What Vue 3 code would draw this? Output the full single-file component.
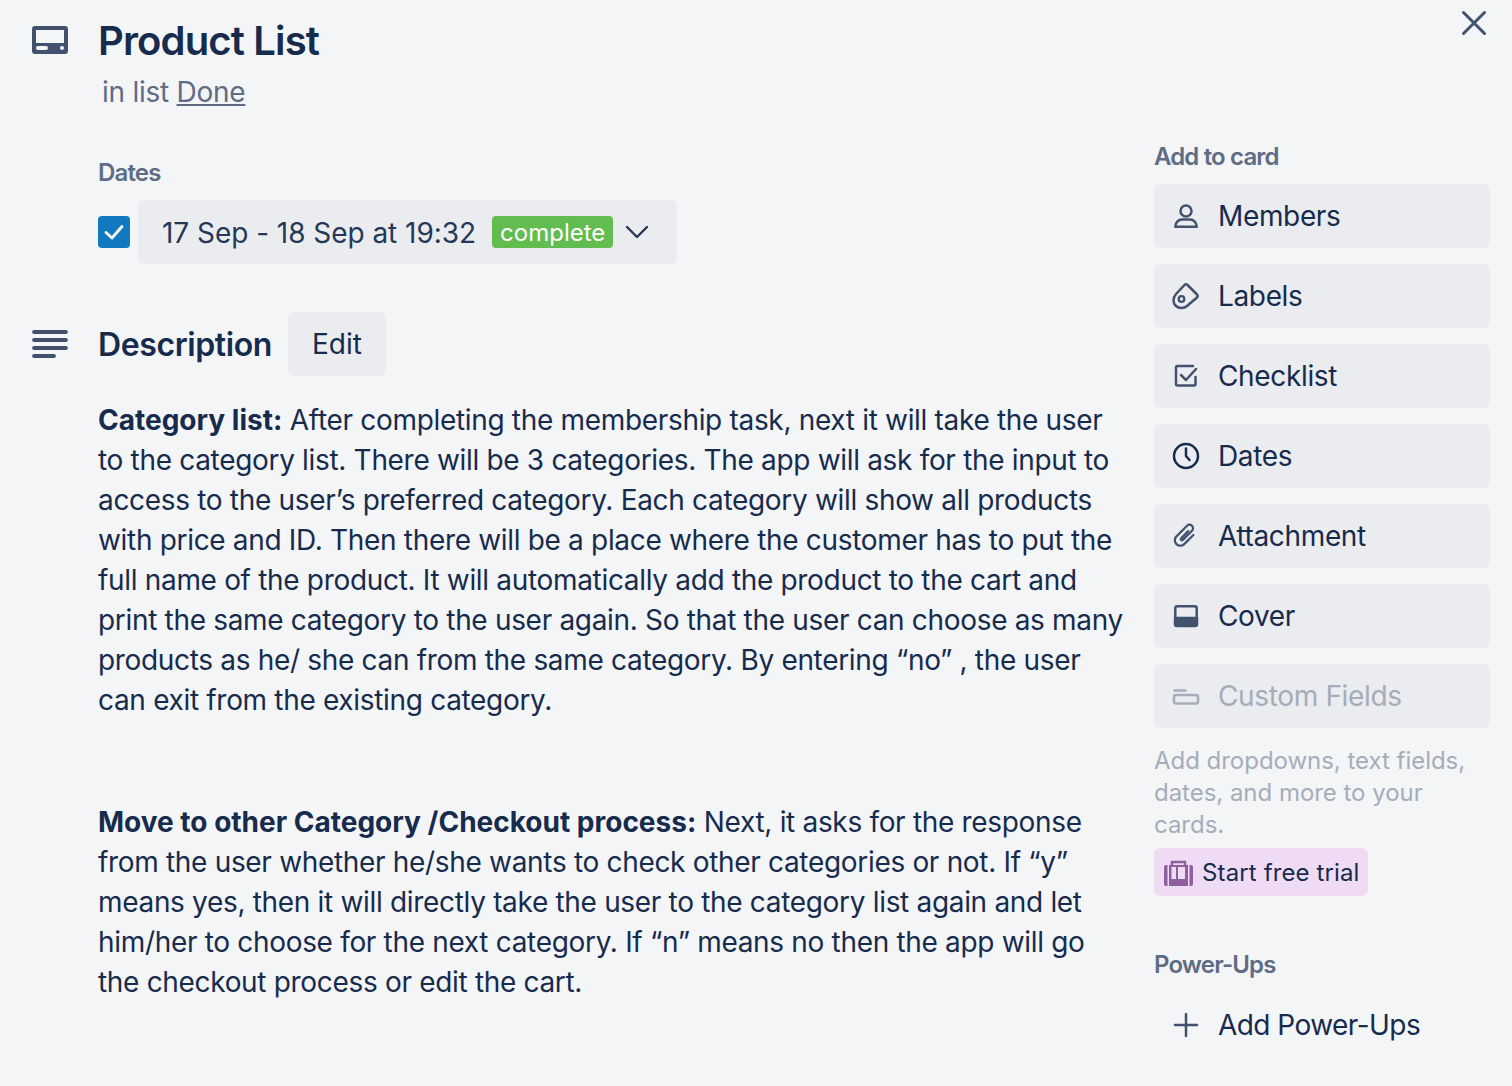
<script setup>
const actions = [
  { label: 'Members', icon: 'members' },
  { label: 'Labels', icon: 'labels' },
  { label: 'Checklist', icon: 'checklist' },
  { label: 'Dates', icon: 'dates' },
  { label: 'Attachment', icon: 'attachment' },
  { label: 'Cover', icon: 'cover' },
  { label: 'Custom Fields', icon: 'fields', muted: true },
]
</script>

<template>
  <main class="card">
    <button class="close" aria-label="Close">
      <svg width="32" height="32" viewBox="0 0 32 32"><path d="M5.500 5.500 L26.500 26.500 M26.500 5.500 L5.500 26.500" stroke="#42526e" stroke-width="3" stroke-linecap="round" fill="none"/></svg>
    </button>
    <header class="head">
      <div class="gutter">
        <svg class="ico-head" width="36" height="28" viewBox="0 0 36 28"><path fill-rule="evenodd" fill="#42526e" d="M3 0h30a3 3 0 0 1 3 3v22a3 3 0 0 1-3 3H3a3 3 0 0 1-3-3V3a3 3 0 0 1 3-3Zm1 4v13h28V4H4Zm2 16a2 2 0 1 0 0 4h8a2 2 0 1 0 0-4H6Zm24 0a2 2 0 1 0 0 4 2 2 0 0 0 0-4Z"/></svg>
      </div>
      <div>
        <h1>Product List</h1>
        <p class="inlist">in list <a>Done</a></p>
      </div>
    </header>

    <div class="columns">
      <div class="left">
        <section class="dates">
          <h3>Dates</h3>
          <div class="date-row">
            <span class="check"><svg width="32" height="32" viewBox="0 0 32 32"><path d="M8 16.500 L14 22 L24 10.500" stroke="#fff" stroke-width="2.800" fill="none" stroke-linecap="round" stroke-linejoin="round"/></svg></span>
            <div class="date-pill">
              <span class="date-text">17 Sep - 18 Sep at 19:32</span>
              <span class="badge">complete</span>
              <svg width="24" height="24" viewBox="0 0 24 24"><path d="M2 7 L12 17 L22 7" stroke="#253858" stroke-width="2.400" fill="none" stroke-linecap="round" stroke-linejoin="round"/></svg>
            </div>
          </div>
        </section>

        <section class="desc">
          <div class="desc-head">
            <svg class="ico-desc" width="36" height="28" viewBox="0 0 36 28"><path d="M2 2H34M2 10H34M2 18H34M2 26H22" stroke="#42526e" stroke-width="3.800" stroke-linecap="round"/></svg>
            <h2>Description</h2>
            <button class="edit">Edit</button>
          </div>
          <div class="body">
            <p><strong>Category list:</strong> After completing the membership task, next it will take the user to the category list. There will be 3 categories. The app will ask for the input to access to the user’s preferred category. Each category will show all products with price and ID. Then there will be a place where the customer has to put the full name of the product. It will automatically add the product to the cart and print the same category to the user again. So that the user can choose as many products as he/ she can from the same category. By entering “no” , the user can exit from the existing category.</p>
            <p class="second"><strong>Move to other Category /Checkout process:</strong> Next, it asks for the response from the user whether he/she wants to check other categories or not. If “y” means yes, then it will directly take the user to the category list again and let him/her to choose for the next category. If “n” means no then the app will go the checkout process or edit the cart.</p>
          </div>
        </section>
      </div>

      <aside class="side">
        <h3>Add to card</h3>
        <div class="actions">
          <button v-for="a in actions" :key="a.label" class="action" :class="{ muted: a.muted }">
            <svg width="32" height="32" viewBox="0 0 32 32" fill="none" :stroke="a.muted ? '#a5adba' : (a.icon === 'dates' ? '#172b4d' : '#42526e')" stroke-width="2.500" stroke-linecap="round" stroke-linejoin="round">
              <template v-if="a.icon === 'members'"><circle cx="16" cy="11" r="5.500"/><path d="M5.300 26.700c0-4 3-7.200 6.700-7.200h8c3.700 0 6.700 3.200 6.700 7.200H5.300Z"/></template>
              <template v-else-if="a.icon === 'labels'"><path d="M14.500 5a2 2 0 0 1 3 0L27 14.500a2 2 0 0 1 0 3L17 26c-4 3.500-9 2-11.500-.5S2.500 18 6 14Z"/><circle cx="11.500" cy="19" r="2.800" stroke-width="2.200"/></template>
              <template v-else-if="a.icon === 'checklist'"><path d="M25.500 17v7a1.500 1.500 0 0 1-1.500 1.500H7.500A1.500 1.500 0 0 1 6 24V7.500A1.500 1.500 0 0 1 7.500 6H23"/><path d="M11 15l5 5 10-11"/></template>
              <template v-else-if="a.icon === 'dates'"><circle cx="16" cy="16" r="12"/><path d="M16 8.500v7.500l3.500 4" /></template>
              <template v-else-if="a.icon === 'attachment'"><path transform="rotate(45 16 16)" stroke-width="2.200" d="M20.500 10V23a5.500 5.500 0 0 1-11 0V8a3.500 3.500 0 0 1 7 0V21a1.200 1.200 0 0 1-2.400 0V11"/></template>
              <template v-else-if="a.icon === 'cover'"><rect x="5.300" y="6.300" width="21.400" height="19.400" rx="2"/><path d="M5 18h22v6a2 2 0 0 1-2 2H7a2 2 0 0 1-2-2Z" fill="#42526e"/></template>
              <template v-else><path d="M4.500 10.500h11"/><rect x="4" y="15" width="24" height="8.500" rx="2"/></template>
            </svg>
            <span>{{ a.label }}</span>
          </button>
        </div>
        <p class="upsell">Add dropdowns, text fields, dates, and more to your cards.</p>
        <button class="trial">
          <svg width="32" height="32" viewBox="0 0 32 32" fill="none"><path fill="#8f5f9e" d="M7 9h19v21H7z"/><path stroke="#8f5f9e" stroke-width="2.500" d="M10 9V6h13v3"/><path fill="#efdbf3" d="M9.500 11h4.500v12H9.500zM16 11h7v12h-7z"/><path fill="#8f5f9e" d="M2 11a2 2 0 0 1 2-2h1.500v21H4a2 2 0 0 1-2-2V11ZM27.500 9H29a2 2 0 0 1 2 2v17a2 2 0 0 1-2 2h-1.500V9Z"/></svg>
          <span>Start free trial</span>
        </button>
        <h3 class="power">Power-Ups</h3>
        <button class="add">
          <svg width="32" height="32" viewBox="0 0 32 32"><path d="M16 5v22M5 16h22" stroke="#42526e" stroke-width="2.500" stroke-linecap="round"/></svg>
          <span>Add Power-Ups</span>
        </button>
      </aside>
    </div>
  </main>
</template>

<style>
html, body { margin: 0; background: #f4f5f7; }
</style>

<style scoped>
.card {
  box-sizing: border-box;
  width: 1512px;
  height: 1086px;
  overflow: hidden;
  position: relative;
  padding: 17px 22px 0 32px;
  background: #f4f5f7;
  color: #172b4d;
  font-family: Inter, "Noto Sans", sans-serif;
}
button { font-family: inherit; border: 0; cursor: pointer; }
.close {
  position: absolute;
  top: 7px;
  right: 22px;
  width: 32px;
  height: 32px;
  padding: 0;
  background: none;
}
.head { display: flex; }
.gutter { width: 66px; flex: none; padding-top: 9px; }
.ico-head { display: block; }
h1 {
  margin: 0;
  font-size: 40px;
  line-height: 48px;
  font-weight: 600;
  letter-spacing: -.85px;
  color: #172b4d;
}
.inlist { margin: 7px 0 0 4px; font-size: 28px; line-height: 40px; color: #5e6c84; letter-spacing: -.25px; }
.inlist a { text-decoration: underline; }
.columns { display: flex; }
.left { width: 1122px; flex: none; }
h3 { margin: 0; font-size: 24px; line-height: 32px; font-weight: 600; color: #5e6c84; letter-spacing: -.85px; }
.dates { margin: 45px 0 0 66px; }
.date-row { display: flex; gap: 8px; margin-top: 11px; align-items: center; }
.check { width: 32px; height: 32px; background: #1079bf; border-radius: 4px; }
.check svg { display: block; }
.date-pill {
  display: flex;
  align-items: center;
  height: 64px;
  padding: 0 28px 0 24px;
  background: #ebecf0;
  border-radius: 6px;
}
.date-text { font-size: 28px; letter-spacing: -.04px; color: #253858; padding-top: 1px; }
.badge {
  margin: 0 12px 0 16px;
  padding: 0 8px;
  height: 32px;
  line-height: 33px;
  background: #61bd4f;
  color: #fff;
  border-radius: 4px;
  font-size: 24px;
}
.desc { margin-top: 48px; }
.desc-head { display: flex; align-items: center; height: 64px; }
.ico-desc { width: 36px; margin-right: 30px; }
h2 { margin: 0 16px 0 0; font-size: 32px; font-weight: 600; letter-spacing: -.4px; color: #172b4d; }
.edit { height: 64px; padding: 0 24px; background: #ebecf0; border-radius: 6px; font-size: 28px; color: #172b4d; }
.body { margin: 24px 30px 0 66px; font-size: 28px; line-height: 40px; color: #172b4d; letter-spacing: -.32px; }
.body p { margin: 0; }
.body strong { font-weight: 700; letter-spacing: 0; }
.body .second { margin-top: 82px; }
.side { width: 336px; flex: none; padding-top: 29px; }
.actions { display: flex; flex-direction: column; gap: 16px; margin-top: 11px; }
.action, .add {
  display: flex;
  align-items: center;
  gap: 16px;
  width: 336px;
  height: 64px;
  padding: 0 16px;
  background: #ebecf0;
  border-radius: 6px;
  font-size: 28px;
  color: #172b4d;
  text-align: left;
  box-sizing: border-box;
  letter-spacing: -.35px;
}
.action svg, .add svg { flex: none; }
.action.muted { color: #a5adba; }
.upsell { margin: 17px 0 0; font-size: 24px; line-height: 32px; color: #a5adba; letter-spacing: -.03px; }
.trial {
  display: flex;
  align-items: center;
  gap: 8px;
  height: 48px;
  margin-top: 7px;
  padding: 0 8px;
  background: #efdbf3;
  border-radius: 6px;
  font-size: 24px;
  color: #172b4d;
  letter-spacing: .13px;
}
.power { margin-top: 53px; }
.add { background: none; margin-top: 12px; letter-spacing: -.55px; }
</style>
